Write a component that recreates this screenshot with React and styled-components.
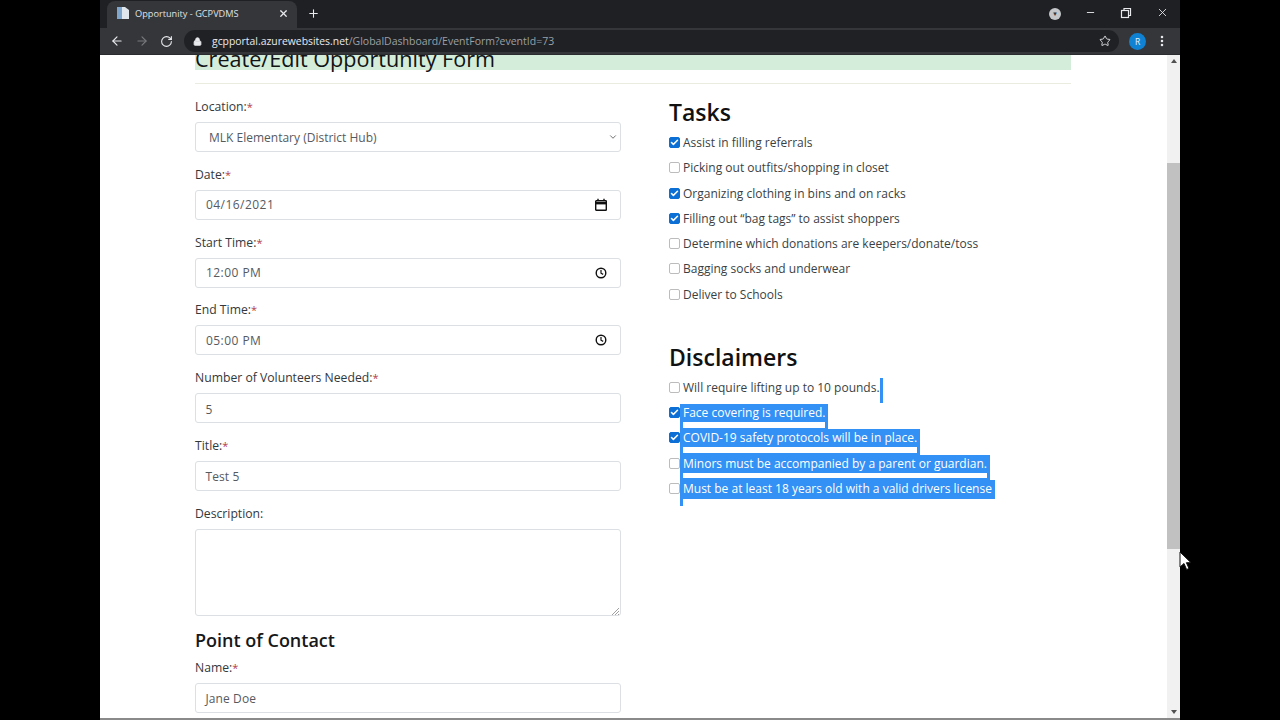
import styled, { createGlobalStyle } from "styled-components";
import {
  ArrowLeft,
  ArrowRight,
  Check,
  ChevronDown,
  EllipsisVertical,
  Lock,
  Minus,
  Plus,
  RotateCw,
  Star,
  X,
} from "lucide-react";

const tasks = [
  { text: "Assist in filling referrals", checked: true },
  { text: "Picking out outfits/shopping in closet" },
  { text: "Organizing clothing in bins and on racks", checked: true },
  { text: "Filling out “bag tags” to assist shoppers", checked: true },
  { text: "Determine which donations are keepers/donate/toss" },
  { text: "Bagging socks and underwear" },
  { text: "Deliver to Schools" },
];

const disclaimers = [
  { text: "Face covering is required.", checked: true },
  { text: "COVID-19 safety protocols will be in place.", checked: true },
  { text: "Minors must be accompanied by a parent or guardian." },
  { text: "Must be at least 18 years old with a valid drivers license" },
];

const GlobalStyle = createGlobalStyle`
  html, body {
    margin: 0;
    height: 720px;
    overflow: hidden;
    background: #000;
  }
  body {
    font-family: "Open Sans", "Noto Sans", sans-serif;
  }
`;

const Window = styled.div`
  position: relative;
  display: flex;
  flex-direction: column;
  width: 1080px;
  height: 720px;
  margin-left: 100px;
`;

const TabStrip = styled.div`
  display: flex;
  align-items: flex-end;
  height: 28px;
  padding-left: 7px;
  background: #1f2023;
  color: #e8eaed;
`;

const Tab = styled.div`
  display: flex;
  align-items: center;
  width: 190px;
  height: 27px;
  padding: 0 8px 3px 9px;
  box-sizing: border-box;
  background: #35363a;
  border-radius: 8px 8px 0 0;
  font-size: 9.2px;
`;

const TabIcon = styled.svg`
  width: 14px;
  height: 14px;
  margin-right: 5px;
`;

const TabTitle = styled.span`
  flex: 1;
  color: #dfe1e5;
`;

const NewTab = styled.div`
  display: flex;
  margin: 0 0 8px 10px;
`;

const WindowControls = styled.div`
  display: flex;
  align-items: center;
  align-self: flex-start;
  gap: 24px;
  margin: 5px 0 0 auto;
  padding-right: 11px;
`;

const ProfileDot = styled.div`
  display: flex;
  align-items: center;
  justify-content: center;
  width: 12px;
  height: 12px;
  margin-top: 3px;
  border-radius: 50%;
  background: #c4c6c9;
  color: #35363a;
  font-size: 6px;
  line-height: 1;
`;

const RestoreIcon = styled.svg`
  width: 12px;
  height: 12px;
`;

const Toolbar = styled.div`
  display: flex;
  align-items: center;
  height: 27px;
  padding: 0 11px 0 10px;
  background: #35363a;
  border-bottom: 1px solid #2a2b2e;
  box-sizing: border-box;
  color: #e8eaed;
`;

const NavButtons = styled.div`
  display: flex;
  align-items: center;
  gap: 11px;
  margin-right: 11px;
`;

const Omnibox = styled.div`
  display: flex;
  align-items: center;
  flex: 1;
  height: 22px;
  padding: 0 8px 0 8.5px;
  border-radius: 11px;
  background: #202124;
  font-size: 10.4px;
`;

const Host = styled.span`
  margin-left: 10.5px;
  color: #e8eaed;
`;

const Path = styled.span`
  flex: 1;
  color: #9aa0a6;
  font-size: 10.5px;
`;

const Avatar = styled.div`
  display: flex;
  align-items: center;
  justify-content: center;
  width: 17px;
  height: 17px;
  margin: 0 9px 0 10px;
  border-radius: 50%;
  background: #0f82d4;
  color: #e8f3fb;
  font-size: 8.5px;
`;

const Viewport = styled.div`
  display: flex;
  flex: 1;
  min-height: 0;
  overflow: hidden;
  background: #fff;
  border-bottom: 2px solid #8a8a8a;
`;

const Page = styled.main`
  flex: 1;
  min-width: 0;
  padding: 0 96px 0 95px;
`;

const TitleBand = styled.div`
  box-sizing: border-box;
  height: 55px;
  margin-top: -40px;
  padding-top: 29px;
  background: #d4edda;
  color: #111315;
  font-size: 21.6px;
  line-height: 30px;
`;

const Rule = styled.hr`
  margin: 13px 0 15px;
  border: 0;
  border-top: 1px solid #e9ecdf;
`;

const Columns = styled.div`
  display: grid;
  grid-template-columns: 426px 1fr;
  column-gap: 48px;
`;

const Column = styled.div`
  display: flex;
  flex-direction: column;
`;

const FieldGroup = styled.div`
  display: flex;
  flex-direction: column;
  margin-bottom: 14.8px;
`;

const Label = styled.div`
  height: 23px;
  color: #33383d;
  font-size: 12.2px;
  line-height: 15px;
`;

const Required = styled.span`
  color: #b5404a;
  font-size: 11px;
`;

const Field = styled.div`
  display: flex;
  align-items: center;
  justify-content: space-between;
  box-sizing: border-box;
  height: ${({ $height }) => $height || 30}px;
  padding: 0 ${({ $padRight }) => $padRight || 9}px 0 ${({ $padLeft }) => $padLeft || 9.5}px;
  border: 1px solid #dcdfe3;
  border-radius: 3px;
  color: #555a5f;
  font-size: 12px;
  letter-spacing: ${({ $spaced }) => ($spaced ? "0.45px" : "0")};
`;

const TextField = styled(Field)`
  padding-top: 2px;
  letter-spacing: 0.1px;
`;

const FieldIcon = styled.svg`
  width: 14px;
  height: 14px;
`;

const Resize = styled.svg`
  align-self: flex-end;
  width: 8px;
  height: 8px;
  margin: 0 -8px 0 auto;
`;

const ContactHeading = styled.h3`
  margin: -1px 0 9px;
  color: #16181a;
  font-size: 18px;
  font-weight: 600;
  line-height: 21px;
`;

const SectionHeading = styled.h2`
  margin: ${({ $top }) => $top}px 0 ${({ $gap }) => $gap}px;
  color: #111;
  font-size: ${({ $size }) => $size}px;
  font-weight: 600;
  line-height: 26px;
`;

const Row = styled.div`
  position: relative;
  display: flex;
  align-items: flex-start;
  height: 25.25px;
  color: #3a3f44;
  font-size: 12px;
  line-height: 18px;
`;

const Box = styled.span`
  display: flex;
  align-items: center;
  justify-content: center;
  box-sizing: border-box;
  flex: none;
  width: 11px;
  height: 11px;
  margin: 3px 3px 0 0;
  border: 1px solid ${({ $checked }) => ($checked ? "#0b6fd6" : "#bcbcbc")};
  border-radius: 2px;
  background: ${({ $checked }) => ($checked ? "#0b6fd6" : "#fff")};
  color: #fff;
`;

const Selected = styled.span`
  display: inline-flex;
  flex-direction: column;
  margin-left: -3px;
  padding: 0 3px;
  height: ${({ $last }) => ($last ? "19px" : "25.25px")};
  background: #3390f4;
  color: #fff;
`;

const SelectionGap = styled.span`
  display: block;
  height: 5.5px;
  background: #fff;
`;

const LineEnd = styled.span`
  display: inline-block;
  width: 3px;
  height: 25px;
  margin-top: -1px;
  background: #3390f4;
`;

const TailEnd = styled.span`
  position: absolute;
  left: 11px;
  top: 19px;
  width: 3px;
  height: 7px;
  background: #3390f4;
`;

const Scrollbar = styled.div`
  display: flex;
  flex-direction: column;
  align-items: center;
  width: 13px;
  background: #f1f1f1;
`;

const ScrollArrow = styled.span`
  width: 0;
  height: 0;
  margin: ${({ $dir }) => ($dir === "up" ? "4px 0" : "auto 0 4px")};
  border-left: 3.5px solid transparent;
  border-right: 3.5px solid transparent;
  border-${({ $dir }) => ($dir === "up" ? "bottom" : "top")}: 4px solid #505050;
`;

const ScrollThumb = styled.div`
  flex: none;
  width: 100%;
  height: 386px;
  margin-top: 96px;
  background: #c1c1c1;
`;

const Cursor = styled.svg`
  position: absolute;
  left: 1079px;
  top: 551px;
  width: 14px;
  height: 20px;
`;

const CalendarGlyph = () => (
  <FieldIcon viewBox="0 0 14 14" fill="none" stroke="#111" strokeWidth="1.4">
    <rect x="1.7" y="2.7" width="10.6" height="9.6" rx="0.6" />
    <path d="M1.7 5.2h10.6" strokeWidth="2.4" />
    <path d="M4 .8v2M10 .8v2" />
  </FieldIcon>
);

const ClockGlyph = () => (
  <FieldIcon viewBox="0 0 14 14" fill="none" stroke="#111" strokeWidth="1.4">
    <circle cx="7" cy="7" r="4.8" />
    <path d="M7 4v3.2l2.2 1.2" strokeWidth="1.2" />
  </FieldIcon>
);

const Star_ = () => <Required>*</Required>;

const App = () => {
  return (
    <>
      <GlobalStyle />
      <Window>
        <TabStrip>
          <Tab>
            <TabIcon viewBox="0 0 14 14">
              <path d="M1 1h8l4 3v9H1z" fill="#dfe6ee" />
              <path d="M1 1h5v12H1z" fill="#7fa6cc" />
            </TabIcon>
            <TabTitle>Opportunity - GCPVDMS</TabTitle>
            <X size={11} strokeWidth={2.6} />
          </Tab>
          <NewTab>
            <Plus size={13} strokeWidth={2} />
          </NewTab>
          <WindowControls>
            <ProfileDot>▼</ProfileDot>
            <Minus size={11} />
            <RestoreIcon viewBox="0 0 12 12" fill="none" stroke="#e8eaed" strokeWidth="1.2">
              <rect x="1.5" y="3.5" width="7" height="7" />
              <path d="M4 3.5V1.5h6.5v7H8.5" />
            </RestoreIcon>
            <X size={13} strokeWidth={1.6} />
          </WindowControls>
        </TabStrip>
        <Toolbar>
          <NavButtons>
            <ArrowLeft size={14} strokeWidth={2} />
            <ArrowRight size={14} strokeWidth={2} color="#77797c" />
            <RotateCw size={13} strokeWidth={2} />
          </NavButtons>
          <Omnibox>
            <Lock size={9} fill="#e8eaed" strokeWidth={2.4} />
            <Host>gcpportal.azurewebsites.net</Host>
            <Path>/GlobalDashboard/EventForm?eventId=73</Path>
            <Star size={12} strokeWidth={1.8} />
          </Omnibox>
          <Avatar>R</Avatar>
          <EllipsisVertical size={14} strokeWidth={2.4} />
        </Toolbar>
        <Viewport>
          <Page>
            <TitleBand>Create/Edit Opportunity Form</TitleBand>
            <Rule />
            <Columns>
              <Column>
                <FieldGroup>
                  <Label>Location:<Star_ /></Label>
                  <Field $padLeft={13} $padRight={2}>
                    MLK Elementary (District Hub)
                    <ChevronDown size={10} color="#555" />
                  </Field>
                </FieldGroup>
                <FieldGroup>
                  <Label>Date:<Star_ /></Label>
                  <Field $padLeft={10} $padRight={12} $spaced>
                    04/16/2021
                    <CalendarGlyph />
                  </Field>
                </FieldGroup>
                <FieldGroup>
                  <Label>Start Time:<Star_ /></Label>
                  <Field $padLeft={10} $padRight={12} $spaced>
                    12:00 PM
                    <ClockGlyph />
                  </Field>
                </FieldGroup>
                <FieldGroup>
                  <Label>End Time:<Star_ /></Label>
                  <Field $padLeft={10} $padRight={12} $spaced>
                    05:00 PM
                    <ClockGlyph />
                  </Field>
                </FieldGroup>
                <FieldGroup>
                  <Label>Number of Volunteers Needed:<Star_ /></Label>
                  <TextField>5</TextField>
                </FieldGroup>
                <FieldGroup>
                  <Label>Title:<Star_ /></Label>
                  <TextField>Test 5</TextField>
                </FieldGroup>
                <FieldGroup>
                  <Label>Description:</Label>
                  <Field $height={87}>
                    <Resize viewBox="0 0 8 8" stroke="#888" strokeWidth="0.8">
                      <path d="M1 8l7-7M4 8l4-4M7 8l1-1" />
                    </Resize>
                  </Field>
                </FieldGroup>
                <ContactHeading>Point of Contact</ContactHeading>
                <Label>Name:<Star_ /></Label>
                <TextField>Jane Doe</TextField>
              </Column>
              <Column>
                <SectionHeading $top={0} $gap={9} $size={23}>Tasks</SectionHeading>
                {tasks.map((task) => (
                  <Row key={task.text}>
                    <Box $checked={task.checked}>
                      {task.checked && <Check size={9} strokeWidth={4} />}
                    </Box>
                    {task.text}
                  </Row>
                ))}
                <SectionHeading $top={33} $gap={9} $size={23}>Disclaimers</SectionHeading>
                <Row>
                  <Box />
                  Will require lifting up to 10 pounds.
                  <LineEnd />
                </Row>
                {disclaimers.map((item, i) => {
                  const last = i === disclaimers.length - 1;
                  return (
                    <Row key={item.text}>
                      <Box $checked={item.checked}>
                        {item.checked && <Check size={9} strokeWidth={4} />}
                      </Box>
                      <Selected $last={last}>
                        {item.text}
                        {!last && <SelectionGap />}
                      </Selected>
                      {last && <TailEnd />}
                    </Row>
                  );
                })}
              </Column>
            </Columns>
          </Page>
          <Scrollbar>
            <ScrollArrow $dir="up" />
            <ScrollThumb />
            <ScrollArrow $dir="down" />
          </Scrollbar>
        </Viewport>
        <Cursor viewBox="0 0 14 20">
          <path d="M1 1v15l4-3.5 2.6 6 2.4-1-2.6-5.8H12z" fill="#fff" stroke="#111" strokeWidth="1" />
        </Cursor>
      </Window>
    </>
  );
};

export default App;
